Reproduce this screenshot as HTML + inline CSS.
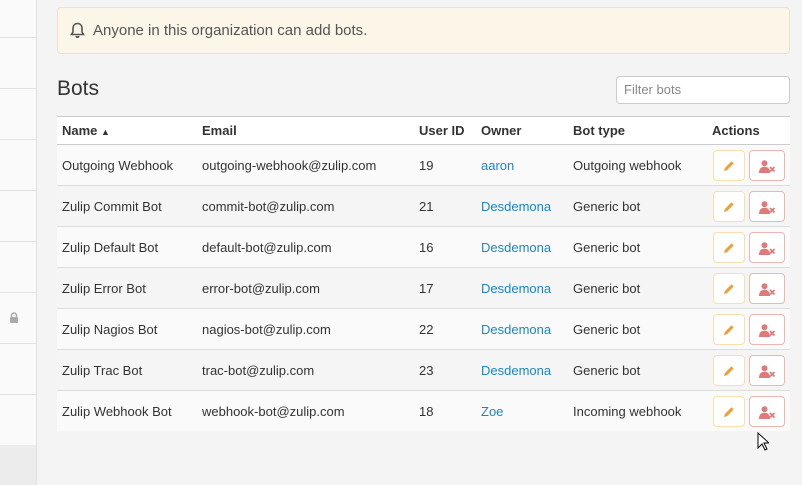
<!DOCTYPE html>
<html><head><style>
body{margin:0;width:802px;height:485px;background:#f4f4f4;font-family:"Liberation Sans",sans-serif;font-size:13px;color:#333;position:relative;overflow:hidden}
.side{position:absolute;left:0;top:0;width:36px;height:445px;background:#fafafa;border-right:1px solid #e0e0e0}
.side div{position:absolute;left:0;width:36px;border-top:1px solid #e2e2e2}
.side2{position:absolute;left:0;top:445px;width:36px;height:40px;background:#ececec;border-right:1px solid #e0e0e0}
.alert{position:absolute;left:57px;top:7px;width:731px;height:45px;background:#fbf6e8;border:1px solid #ebe3cc;border-radius:4px;color:#555;font-size:15px;line-height:45px}
.alert span{position:absolute;left:35px}
h2{position:absolute;left:57px;top:77px;margin:0;font-weight:normal;font-size:21px;color:#333}
.filter{position:absolute;left:616px;top:76px;border:1px solid #ccc;border-radius:4px;background:#fff;color:#888;font-size:13px;line-height:26px;padding-left:7px;box-sizing:border-box;width:174px;height:28px}
table{position:absolute;left:57px;top:116px;width:733px;border-collapse:collapse}
th{height:27px;text-align:left;font-weight:bold;background:#fff;border-top:1px solid #ccc;border-bottom:1px solid #ccc;padding:0 0 0 5px}
td{height:40px;padding:0 0 0 5px;border-bottom:1px solid #ddd}
tr:nth-child(odd) td{background:#f5f5f5}
tr:nth-child(even) td{background:#fafafa}
tr:last-child td{border-bottom:none}
a{color:#1a86c8;text-decoration:none}
.b{display:inline-block;width:32px;height:31px;border-radius:4px;box-sizing:border-box;vertical-align:middle;text-align:center;line-height:29px;background:#fff}
.e{border:1px solid #f9dfae;margin-right:4px}
.d{border:1px solid #efb4b4;width:36px}
</style></head><body>
<div class="side"><div style="top:37px"></div><div style="top:88px"></div><div style="top:139px"></div><div style="top:190px"></div><div style="top:241px"></div><div style="top:292px"></div><div style="top:343px"></div><div style="top:394px"></div>
<svg style="position:absolute;left:9px;top:312px" width="10" height="12" viewBox="0 0 10 12"><path d="M2.5 5V3.5a2.5 2.5 0 0 1 5 0V5" fill="none" stroke="#aaa" stroke-width="1.5"/><rect x="1" y="5" width="8" height="6" rx="1" fill="#aaa"/></svg></div>
<div class="side2"></div>
<div class="alert"><svg style="position:absolute;left:12px;top:14px" width="15" height="17" viewBox="0 0 15 17"><path d="M7.5 1.5c-3 0-4.5 2.3-4.5 5v3.5L1.5 12.5h12L12 10V6.5c0-2.7-1.5-5-4.5-5z" fill="none" stroke="#555" stroke-width="1.6"/><path d="M5.5 14a2 2 0 0 0 4 0z" fill="#555"/></svg><span>Anyone in this organization can add bots.</span></div>
<h2>Bots</h2>
<div class="filter">Filter bots</div>
<table>
<tr><th style="width:135px">Name <span style="font-size:9px">▲</span></th><th style="width:212px">Email</th><th style="width:57px">User ID</th><th style="width:87px">Owner</th><th style="width:134px">Bot type</th><th>Actions</th></tr>
<tr><td>Outgoing Webhook</td><td>outgoing-webhook@zulip.com</td><td>19</td><td><a>aaron</a></td><td>Outgoing webhook</td><td>B</td></tr>
<tr><td>Zulip Commit Bot</td><td>commit-bot@zulip.com</td><td>21</td><td><a>Desdemona</a></td><td>Generic bot</td><td>B</td></tr>
<tr><td>Zulip Default Bot</td><td>default-bot@zulip.com</td><td>16</td><td><a>Desdemona</a></td><td>Generic bot</td><td>B</td></tr>
<tr><td>Zulip Error Bot</td><td>error-bot@zulip.com</td><td>17</td><td><a>Desdemona</a></td><td>Generic bot</td><td>B</td></tr>
<tr><td>Zulip Nagios Bot</td><td>nagios-bot@zulip.com</td><td>22</td><td><a>Desdemona</a></td><td>Generic bot</td><td>B</td></tr>
<tr><td>Zulip Trac Bot</td><td>trac-bot@zulip.com</td><td>23</td><td><a>Desdemona</a></td><td>Generic bot</td><td>B</td></tr>
<tr><td>Zulip Webhook Bot</td><td>webhook-bot@zulip.com</td><td>18</td><td><a>Zoe</a></td><td>Incoming webhook</td><td>B</td></tr>
</table>
<script>
document.querySelectorAll('tr td:last-child').forEach(function(t){t.style.paddingLeft='0';t.style.paddingRight='0';t.style.whiteSpace='nowrap';t.innerHTML='<span style="display:inline-block;width:6px"></span><span class="b e"><svg width="12" height="12" viewBox="0 0 12 12" style="vertical-align:middle"><path d="M1 11l0.8-3L8.5 1.3l2.2 2.2L4 10.2z" fill="#e8a33d"/></svg></span><span class="b d"><svg width="17" height="13" viewBox="0 0 17 13" style="vertical-align:middle"><circle cx="5.5" cy="3.2" r="3" fill="#e07a7a"/><path d="M0 13c0-4.5 2.3-6.3 5.5-6.3s5.5 1.8 5.5 6.3z" fill="#e07a7a"/><path d="M11 7l4.5 4.5M15.5 7L11 11.5" stroke="#e07a7a" stroke-width="1.7"/></svg></span>';});
</script>
<svg style="position:absolute;left:757px;top:432px" width="12" height="20" viewBox="0 0 12 20"><path d="M1 1v15l4-4 3 6 2-1-3-6h5z" fill="#fff" stroke="#000" stroke-width="1"/></svg>
</body></html>
